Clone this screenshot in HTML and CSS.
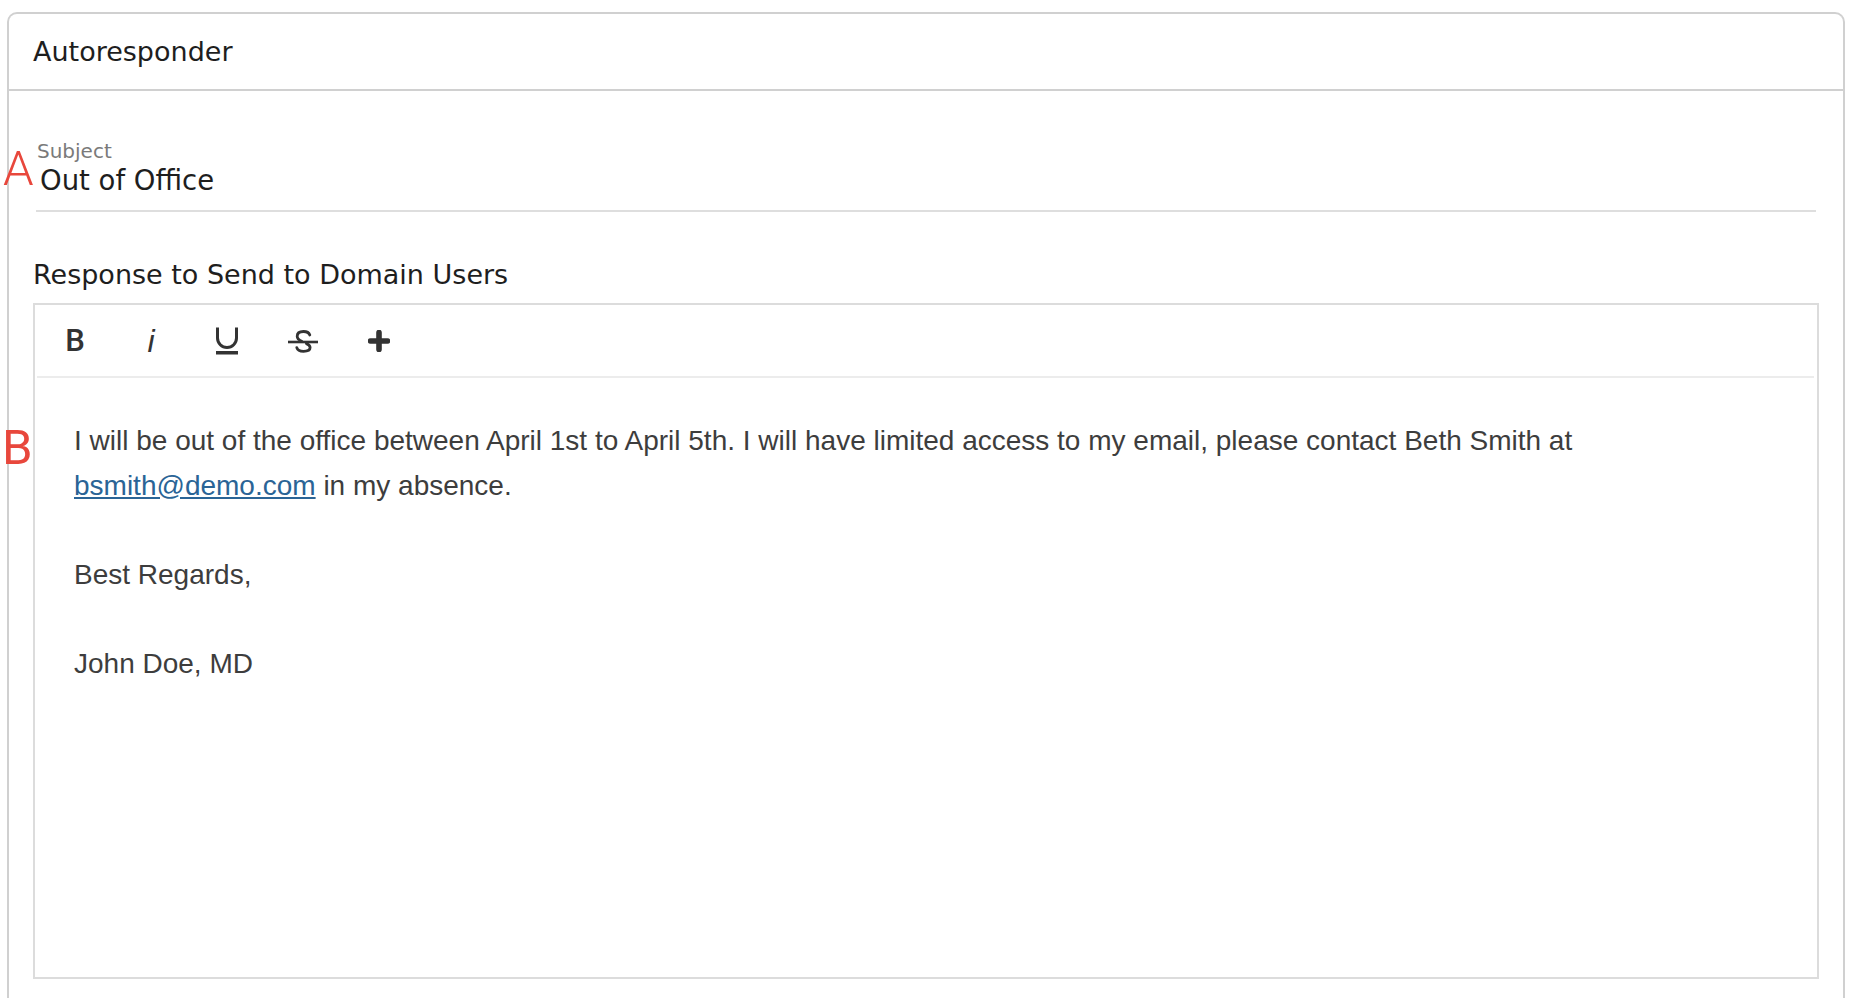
FILE: index.html
```html
<!DOCTYPE html>
<html lang="en">
<head>
<meta charset="utf-8">
<title>Autoresponder</title>
<link rel="stylesheet" href="styles.css">
</head>
<body>
<div class="page">
  <section class="card">
    <header class="card-header">
      <h2 class="card-title">Autoresponder</h2>
    </header>
    <div class="card-body">
      <div class="field">
        <label class="field-label">Subject</label>
        <div class="field-value">Out of Office</div>
      </div>
      <h3 class="section-label">Response to Send to Domain Users</h3>
      <div class="editor">
        <div class="toolbar">
          <button class="tool tool-bold" type="button">B</button>
          <button class="tool tool-italic" type="button">i</button>
          <button class="tool" type="button">
            <svg width="26" height="30" viewBox="0 0 26 30" aria-hidden="true">
              <path d="M3.5 1.5 V12 A9.5 9.5 0 0 0 22.5 12 V1.5" fill="none" stroke="#333" stroke-width="3"/>
              <rect x="2" y="25" width="22" height="3.5" fill="#333"/>
            </svg>
          </button>
          <button class="tool" type="button">
            <svg width="32" height="24" viewBox="0 0 32 24" aria-hidden="true">
              <path d="M22.8 6 C22 3.6 19.6 2.5 16.5 2.5 C12.6 2.5 10.2 4.4 10.2 7.3 C10.2 9.9 12.2 11.3 14.8 12.2" fill="none" stroke="#333" stroke-width="2.8" stroke-linecap="round"/>
              <path d="M19.4 14.6 C21.9 15.6 23.1 17 23.1 18.6 C23.1 21.1 20.4 22.4 16.5 22.4 C13 22.4 10.5 21.1 9.8 18.6" fill="none" stroke="#333" stroke-width="2.8" stroke-linecap="round"/>
              <path d="M1 13 H31" stroke="#333" stroke-width="2.6"/>
            </svg>
          </button>
          <button class="tool" type="button">
            <svg width="22" height="22" viewBox="0 0 22 22" aria-hidden="true">
              <path d="M11 2.5 V19.5 M2.5 11 H19.5" stroke="#333" stroke-width="5.6" stroke-linecap="round"/>
            </svg>
          </button>
        </div>
        <div class="editor-content">
          <p>I will be out of the office between April 1st to April 5th. I will have limited access to my email, please contact Beth Smith at <a href="#" class="mail-link">bsmith@demo.com</a> in my absence.</p>
          <p><br></p>
          <p>Best Regards,</p>
          <p><br></p>
          <p>John Doe, MD</p>
        </div>
      </div>
    </div>
  </section>
  <span class="marker marker-a">A</span>
  <span class="marker marker-b">B</span>
</div>
</body>
</html>
```

FILE: styles.css
```css
html, body {
  margin: 0;
  padding: 0;
  background: #ffffff;
  height: 100%;
  overflow: hidden;
}

.page {
  position: relative;
  padding: 12px 0 0 7px;
  font-family: "DejaVu Sans", "Noto Sans", sans-serif;
  color: #222;
}

.card {
  box-sizing: border-box;
  width: 1838px;
  min-height: 1000px;
  border: 2px solid #d0d0d0;
  border-bottom: none;
  border-radius: 10px 10px 0 0;
  background: #fff;
}

.card-header {
  height: 75px;
  border-bottom: 2px solid #d0d0d0;
  padding-left: 24px;
}

.card-title {
  margin: 0;
  font-size: 27px;
  font-weight: normal;
  line-height: 75px;
  color: #1e1e1e;
}

.card-body {
  padding: 0 24px;
}

.field {
  margin: 48px 3px 0 3px;
  border-bottom: 2px solid #dedede;
  padding-bottom: 13px;
}

.field-label {
  display: block;
  font-size: 20px;
  line-height: 24px;
  color: #7a7a7a;
  padding-left: 1px;
}

.field-value {
  font-size: 27.5px;
  line-height: 34px;
  color: #1e1e1e;
  padding-left: 4px;
}

.section-label {
  margin: 46px 0 11px 0;
  font-size: 27px;
  font-weight: normal;
  line-height: 34px;
  color: #1e1e1e;
}

.editor {
  box-sizing: border-box;
  height: 676px;
  border: 2px solid #dcdcdc;
}

.toolbar {
  display: flex;
  height: 71px;
  margin: 0 3px 0 2px;
  border-bottom: 2px solid #ececec;
}

.tool {
  width: 76px;
  height: 71px;
  padding: 0;
  border: none;
  background: transparent;
  display: flex;
  align-items: center;
  justify-content: center;
  color: #333;
  font-family: "Liberation Sans", Arial, sans-serif;
  font-size: 32px;
  line-height: 1;
}

.tool-bold {
  font-family: Roboto, "Liberation Sans", sans-serif;
  font-weight: 500;
  font-size: 31px;
}

.tool-italic {
  font-style: italic;
}

.editor-content {
  padding: 41px 39px 0 39px;
  font-family: "Liberation Sans", Arial, sans-serif;
  font-size: 28px;
  line-height: 44.5px;
  color: #3d3d3d;
}

.editor-content p {
  margin: 0;
}

.mail-link {
  color: #2a6496;
  text-decoration: underline;
}

.marker {
  position: absolute;
  font-family: Roboto, "Liberation Sans", sans-serif;
  font-size: 49px;
  line-height: 49px;
  color: #e8473c;
}

.marker-a {
  left: 3px;
  top: 144px;
  font-weight: 300;
}

.marker-b {
  left: 2px;
  top: 423px;
  font-weight: 400;
}
```
